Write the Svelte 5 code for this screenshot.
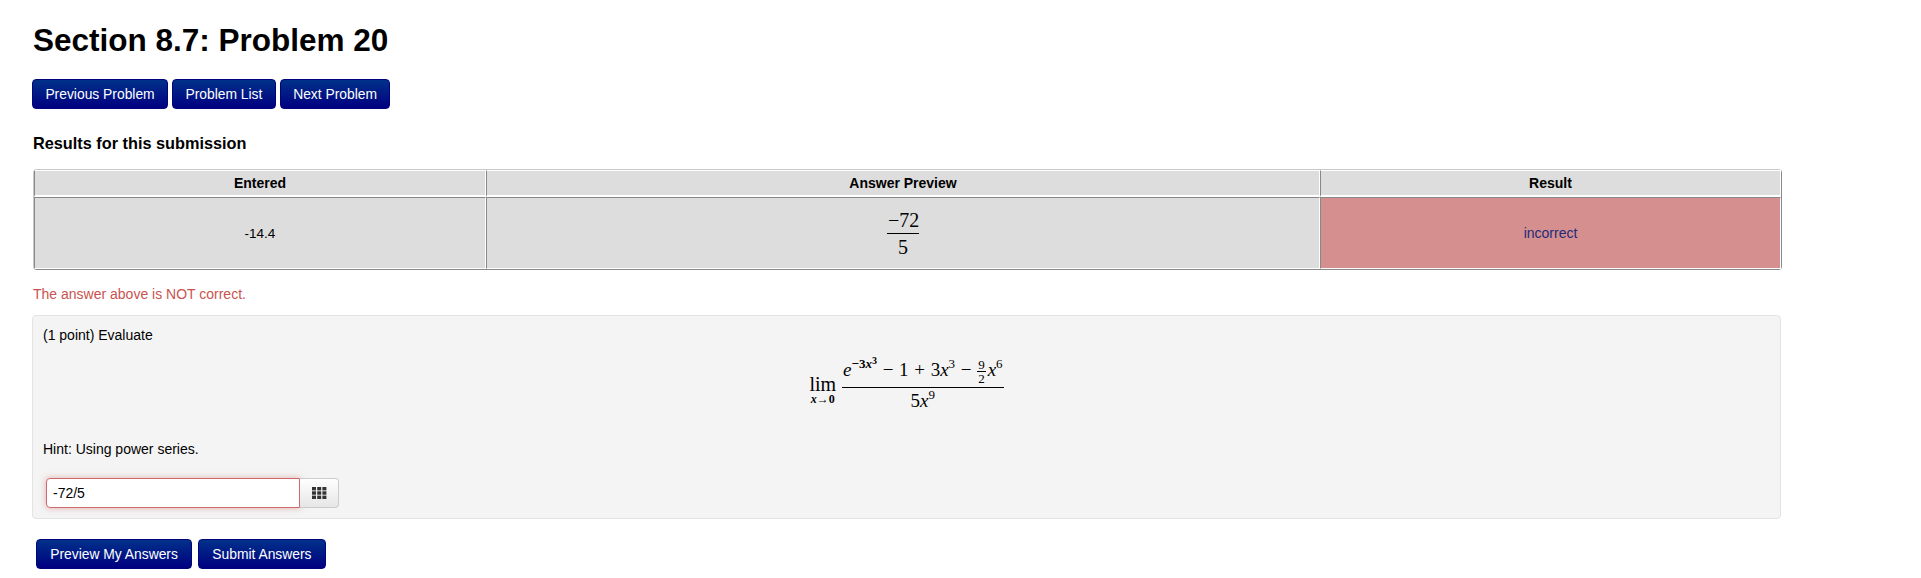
<script>
    let answer = "-72/5";
</script>

<div class="page">
    <h1>Section 8.7: Problem 20</h1>

    <div class="nav">
        <a class="btn" href="#prev">Previous Problem</a>
        <a class="btn" href="#list">Problem List</a>
        <a class="btn" href="#next">Next Problem</a>
    </div>

    <h3>Results for this submission</h3>

    <table class="results">
        <thead>
            <tr>
                <th class="c1">Entered</th>
                <th class="c2">Answer Preview</th>
                <th class="c3">Result</th>
            </tr>
        </thead>
        <tbody>
            <tr>
                <td>-14.4</td>
                <td>
                    <span class="math frac big">
                        <span class="num"><span class="minus">−</span>72</span>
                        <span class="den">5</span>
                    </span>
                </td>
                <td class="bad">incorrect</td>
            </tr>
        </tbody>
    </table>

    <p class="warn">The answer above is NOT correct.</p>

    <div class="well">
        <p class="line">(1 point) Evaluate</p>
        <div class="display math">
            <span class="lim">
                <span class="lim-top">lim</span>
                <span class="lim-sub"><i>x</i>→0</span>
            </span>
            <span class="frac main">
                <span class="num"><i>e</i><sup class="sup strong"><span>−3</span><i>x</i><sup class="sup2">3</sup></sup><span class="op">−</span>1<span class="op">+</span>3<i>x</i><sup class="sup">3</sup><span class="op">−</span><span class="frac tiny"><span class="num">9</span><span class="den">2</span></span><i>x</i><sup class="sup">6</sup></span>
                <span class="den">5<i>x</i><sup class="sup">9</sup></span>
            </span>
        </div>
        <p class="line hint">Hint: Using power series.</p>
        <div class="answer">
            <input class="field" bind:value={answer} />
            <button class="addon" aria-label="Equation editor">
                <svg width="15" height="12" viewBox="0 0 15 12">
                    <g fill="#333">
                        <rect x="0" y="0" width="4" height="3.4" /><rect x="5.2" y="0" width="4" height="3.4" /><rect x="10.4" y="0" width="4" height="3.4" />
                        <rect x="0" y="4.3" width="4" height="3.4" /><rect x="5.2" y="4.3" width="4" height="3.4" /><rect x="10.4" y="4.3" width="4" height="3.4" />
                        <rect x="0" y="8.6" width="4" height="3.4" /><rect x="5.2" y="8.6" width="4" height="3.4" /><rect x="10.4" y="8.6" width="4" height="3.4" />
                    </g>
                </svg>
            </button>
        </div>
    </div>

    <div class="submit">
        <a class="btn" href="#preview">Preview My Answers</a>
        <a class="btn" href="#submit">Submit Answers</a>
    </div>
</div>

<style>
    :global(body) {
        margin: 0;
        background: #fff;
        color: #000;
        font-family: "Liberation Sans", Arial, sans-serif;
        font-size: 14px;
    }

    .page {
        width: 1921px;
        height: 578px;
        box-sizing: border-box;
        padding: 21px 0 0 32px;
        overflow: hidden;
    }

    h1 {
        margin: 0 0 20px 1px;
        font-size: 31.5px;
        line-height: 38px;
        font-weight: bold;
    }

    .nav {
        display: flex;
        gap: 4px;
    }

    .btn {
        display: block;
        height: 30px;
        box-sizing: border-box;
        padding: 0 12.4px;
        line-height: 28px;
        border: 1px solid #00057a;
        border-radius: 4px;
        background: linear-gradient(to bottom, #00318a, #000080);
        color: #fff;
        font-size: 13.85px;
        text-decoration: none;
    }

    h3 {
        margin: 25px 0 17px 1px;
        font-size: 16.3px;
        line-height: 18px;
        font-weight: bold;
    }

    .results {
        width: 1749px;
        margin-left: 1px;
        table-layout: fixed;
        border-collapse: separate;
        border-spacing: 0;
        border: 1px solid #c8c8c8;
        border-right-color: #888;
        border-bottom-color: #888;
        border-radius: 4px;
        font-size: 13.5px;
    }

    .c1 { width: 450px; }
    .c2 { width: 832px; }

    th {
        height: 24px;
        padding: 0;
        background: #ddd;
        border: 1px solid #fff;
        border-left: 1px solid #888;
        border-bottom: 2px solid #fff;
        font-size: 14px;
        font-weight: bold;
        text-align: center;
    }

    td {
        height: 70px;
        padding: 0;
        background: #ddd;
        border: 1px solid #fff;
        border-top: 1px solid #888;
        border-left: 1px solid #888;
        text-align: center;
    }

    .bad {
        background: #d48f8e;
        color: #1f2a7a;
        font-size: 14px;
    }

    .warn {
        margin: 14px 0 11px 1px;
        font-size: 14px;
        line-height: 20px;
        color: #c9524f;
    }

    .well {
        width: 1749px;
        height: 204px;
        box-sizing: border-box;
        padding: 9px 10px 0 10px;
        background: #f4f4f4;
        border: 1px solid #e3e3e3;
        border-radius: 4px;
    }

    .line {
        margin: 0;
        font-size: 14px;
        line-height: 20px;
    }

    .math {
        font-family: "Liberation Serif", "Times New Roman", serif;
        color: #000;
    }

    .frac {
        display: inline-flex;
        flex-direction: column;
        align-items: center;
        vertical-align: middle;
    }

    .frac > .num {
        padding: 0 1px 2px;
        border-bottom: 1.5px solid #000;
        align-self: stretch;
        text-align: center;
        white-space: nowrap;
    }

    .frac > .den {
        padding-top: 2px;
    }

    .big {
        width: 32px;
        font-size: 20px;
        line-height: 22px;
    }

    .display {
        display: flex;
        justify-content: center;
        align-items: center;
        gap: 6px;
        height: 78px;
        margin-top: 1px;
    }

    .lim {
        display: inline-flex;
        flex-direction: column;
        align-items: center;
        line-height: 13px;
        padding-top: 11px;
    }

    .lim-top {
        font-size: 20px;
        line-height: 17px;
    }

    .lim-sub {
        font-size: 12px;
        font-weight: bold;
    }

    .main {
        font-size: 19px;
        line-height: 22px;
    }

    .main .op {
        margin: 0 5.7px;
    }

    .sup {
        font-size: 13px;
        line-height: 0;
        vertical-align: 8px;
    }

    .strong {
        font-weight: bold;
    }

    .sup2 {
        font-size: 10px;
        line-height: 0;
        vertical-align: 4px;
    }

    .tiny {
        font-size: 13px;
        line-height: 13px;
        margin-right: 2px;
    }

    .tiny > .num {
        padding: 0 1px;
        border-bottom-width: 1px;
    }

    .tiny > .den {
        padding: 0;
    }

    .hint {
        margin-top: 15px;
    }

    .answer {
        display: flex;
        margin: 19px 0 0 3px;
        height: 30px;
    }

    .field {
        width: 254px;
        height: 30px;
        box-sizing: border-box;
        padding: 0 6px;
        background: #fff;
        border: 1px solid #cf6a6a;
        border-radius: 4px 0 0 4px;
        box-shadow: 0 0 6px rgba(207, 106, 106, 0.5);
        font-family: "Liberation Sans", Arial, sans-serif;
        font-size: 14px;
        color: #000;
        outline: none;
    }

    .addon {
        width: 39px;
        height: 30px;
        padding: 0;
        display: flex;
        align-items: center;
        justify-content: center;
        background: linear-gradient(to bottom, #fff, #e6e6e6);
        border: 1px solid #ccc;
        border-left: 0;
        border-radius: 0 4px 4px 0;
    }

    .submit {
        display: flex;
        gap: 6px;
        margin: 20px 0 0 4px;
    }

    .submit .btn {
        padding: 0 13.2px;
    }
</style>
